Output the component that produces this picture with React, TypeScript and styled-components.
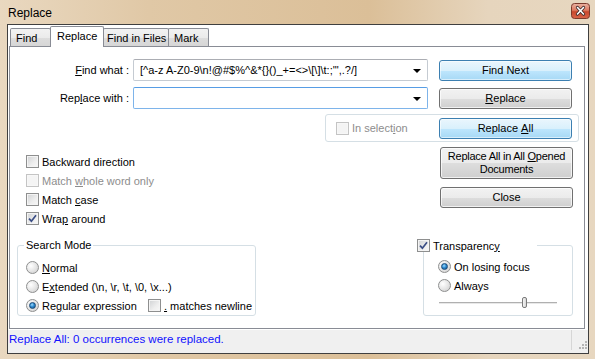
import styled, { createGlobalStyle } from 'styled-components';

const GlobalStyle = createGlobalStyle`
  html, body {
    margin: 0;
    padding: 0;
  }
  body {
    font-family: 'Liberation Sans', Arial, sans-serif;
    font-size: 11px;
    color: #000;
  }
`;

const Window = styled.div`
  width: 595px;
  height: 359px;
  box-sizing: border-box;
  display: flex;
  flex-direction: column;
  overflow: hidden;
  background: linear-gradient(90deg, #e9d8c0 0%, #e0c8a6 25%, #dbbf98 62%, #e6d5bd 82%, #e7d7c0 100%);
`;

const TitleBar = styled.div`
  height: 24px;
  display: flex;
  align-items: center;
  justify-content: space-between;
  padding: 0 5px 0 8px;
`;

const TitleText = styled.span`
  font-size: 12px;
  padding-top: 1px;
`;

const CloseButton = styled.div`
  width: 19px;
  height: 16px;
  margin-top: -3px;
  display: flex;
`;

const Client = styled.div`
  margin: 0 6px 0 7px;
  height: 330px;
  box-sizing: border-box;
  border: 1px solid #3f3f3f;
  background: #fff;
  display: flex;
  flex-direction: column;
`;

const TabStrip = styled.div`
  height: 21px;
  display: flex;
  align-items: flex-end;
  padding-left: 2px;
`;

const Tab = styled.div<{ $active?: boolean; $w: number; $pl: number }>`
  box-sizing: border-box;
  width: ${(p) => p.$w}px;
  height: ${(p) => (p.$active ? 21 : 18)}px;
  margin-left: -1px;
  margin-bottom: ${(p) => (p.$active ? -1 : 0)}px;
  padding-left: ${(p) => p.$pl}px;
  padding-top: 2px;
  border: 1px solid #898c95;
  border-bottom: none;
  border-radius: 2px 2px 0 0;
  line-height: 14px;
  position: relative;
  z-index: ${(p) => (p.$active ? 2 : 1)};
  background: ${(p) =>
    p.$active ? '#fff' : 'linear-gradient(#f2f2f2 0%, #ebebeb 50%, #dddddd 51%, #d6d6d6 100%)'};
  &:first-child {
    margin-left: 0;
  }
`;

const Panel = styled.div`
  margin: 0 3px 0 1px;
  height: 283px;
  box-sizing: border-box;
  border: 1px solid #898c95;
  background: #fff;
  display: flex;
  flex-direction: column;
`;

const FieldRow = styled.div<{ $top: number }>`
  display: flex;
  align-items: center;
  margin-top: ${(p) => p.$top}px;
  height: 22px;
`;

const FieldLabel = styled.div`
  width: 119px;
  text-align: right;
  margin-right: 4px;
`;

const Combo = styled.div<{ $focus?: boolean }>`
  width: 295px;
  height: 22px;
  box-sizing: border-box;
  border: 1px solid ${(p) => (p.$focus ? '#7eb4ea' : '#c5cbd2')};
  border-top-color: ${(p) => (p.$focus ? '#569de5' : '#abadb3')};
  border-radius: 2px;
  display: flex;
  align-items: center;
  padding-left: 6px;
  margin-right: 11px;
  white-space: nowrap;
`;

const ComboText = styled.span`
  flex: 1;
  overflow: hidden;
`;

const ComboArrow = styled.span`
  width: 0;
  height: 0;
  margin: 1px 6px 0 4px;
  border-left: 4px solid transparent;
  border-right: 4px solid transparent;
  border-top: 4px solid #000;
`;

const Button = styled.div<{ $primary?: boolean; $tall?: boolean }>`
  width: 133px;
  height: ${(p) => (p.$tall ? 32 : 21)}px;
  box-sizing: border-box;
  border: 1px solid ${(p) => (p.$primary ? '#3c7fb1' : '#707070')};
  border-radius: 3px;
  box-shadow: inset 0 0 0 1px ${(p) => (p.$primary ? 'rgba(255,255,255,0.55)' : 'rgba(255,255,255,0.7)')};
  background: ${(p) =>
    p.$primary
      ? 'linear-gradient(#eaf6fd 0%, #d9f0fc 50%, #bee6fd 51%, #a7d9f5 100%)'
      : 'linear-gradient(#f2f2f2 0%, #ebebeb 50%, #dddddd 51%, #cfcfcf 100%)'};
  display: flex;
  align-items: center;
  justify-content: center;
  text-align: center;
  line-height: 13px;
  white-space: nowrap;
  letter-spacing: ${(p) => (p.$tall ? '-0.25px' : '0')};
`;

const SelectionGroup = styled.div`
  margin: 5px 0 0 315px;
  width: 254px;
  height: 28px;
  box-sizing: border-box;
  border: 1px solid #d5dfe5;
  border-radius: 3px;
  display: flex;
  align-items: center;
  justify-content: space-between;
  padding: 0 6px 0 10px;
`;

const Middle = styled.div`
  display: flex;
  justify-content: space-between;
  padding: 0 11px 0 16px;
`;

const OptionList = styled.div`
  display: flex;
  flex-direction: column;
  padding-top: 10px;
`;

const ButtonColumn = styled.div`
  display: flex;
  flex-direction: column;
  gap: 8px;
  padding-top: 5px;
`;

const OptionRow = styled.div<{ $w?: number }>`
  height: 19px;
  display: flex;
  align-items: center;
  gap: 3px;
  ${(p) => (p.$w ? `width: ${p.$w}px;` : '')}
`;

const OptionText = styled.span<{ $disabled?: boolean }>`
  color: ${(p) => (p.$disabled ? '#8d8d8d' : '#000')};
  white-space: nowrap;
`;

const U = styled.span`
  text-decoration: underline;
  text-underline-offset: 1px;
`;

const CheckBoxBox = styled.span<{ $disabled?: boolean }>`
  width: 13px;
  height: 13px;
  box-sizing: border-box;
  flex: none;
  border: 1px solid ${(p) => (p.$disabled ? '#c4c4c4' : '#8e8f8f')};
  background: ${(p) =>
    p.$disabled ? '#f4f4f4' : 'linear-gradient(135deg, #cfd1d3 0%, #eeeeee 60%, #f8f8f8 100%)'};
  box-shadow: inset 0 0 0 1px ${(p) => (p.$disabled ? '#f7f7f7' : '#f4f4f4')};
  display: flex;
  align-items: center;
  justify-content: center;
`;

const RadioDot = styled.span<{ $checked?: boolean }>`
  width: 13px;
  height: 13px;
  box-sizing: border-box;
  flex: none;
  border-radius: 50%;
  border: 1px solid #8e8f8f;
  background: radial-gradient(circle at 35% 35%, #ffffff 0%, #e6e6e6 50%, #c9c9c9 100%);
  display: flex;
  align-items: center;
  justify-content: center;
  &::after {
    content: '';
    display: ${(p) => (p.$checked ? 'block' : 'none')};
    width: 7px;
    height: 7px;
    border-radius: 50%;
    box-sizing: border-box;
    border: 1px solid #1b4a77;
    background: radial-gradient(circle at 40% 35%, #9fdcff 0%, #2e8bd0 45%, #0f4f88 100%);
  }
`;

const BottomRow = styled.div`
  display: flex;
  align-items: flex-start;
  margin-top: 11px;
  padding-left: 7px;
`;

const GroupBox = styled.fieldset<{ $w: number; $gap?: number }>`
  margin: 0 0 0 ${(p) => p.$gap ?? 0}px;
  padding: 0;
  min-width: 0;
  width: ${(p) => p.$w}px;
  height: 77px;
  box-sizing: border-box;
  border: 1px solid #d5dfe5;
  border-radius: 3px;
`;

const GroupLegend = styled.legend`
  margin-left: 6px;
  padding: 0 2px;
  height: 13px;
  line-height: 13px;
`;

const CheckLegend = styled.legend`
  margin-left: -7px;
  padding: 0;
  width: 120px;
  height: 13px;
  background: #fff;
  display: flex;
  align-items: center;
  gap: 3px;
`;

const GroupBody = styled.div<{ $pl: number; $pt: number }>`
  display: flex;
  flex-direction: column;
  padding: ${(p) => p.$pt}px 0 0 ${(p) => p.$pl}px;
`;

const InlineRow = styled.div`
  display: flex;
  align-items: center;
`;

const Slider = styled.div`
  position: relative;
  width: 118px;
  height: 15px;
  margin-left: 1px;
  display: flex;
  align-items: center;
`;

const SliderTrack = styled.div`
  width: 100%;
  height: 2px;
  box-sizing: border-box;
  border-top: 1px solid #b0b0b0;
  border-bottom: 1px solid #e8e8e8;
`;

const SliderThumb = styled.div`
  position: absolute;
  top: 2px;
  width: 5px;
  height: 11px;
  box-sizing: border-box;
  border: 1px solid #7a7a7a;
  border-radius: 2px;
  background: linear-gradient(90deg, #f4f4f4, #d8d8d8);
`;

const StatusBar = styled.div`
  margin-top: 1px;
  height: 23px;
  background: #f0f0f0;
  display: flex;
  align-items: flex-start;
  justify-content: space-between;
`;

const StatusText = styled.span`
  color: #1010ff;
  font-size: 11.5px;
  line-height: 17px;
  padding: 1px 0 0 1px;
`;

const StatusGrip = styled.div`
  width: 16px;
  height: 20px;
  border-left: 1px solid #d6d6d6;
  display: flex;
  align-items: flex-end;
  justify-content: flex-end;
`;

function CheckBox({ checked, disabled }: { checked?: boolean; disabled?: boolean }) {
  return (
    <CheckBoxBox $disabled={disabled}>
      {checked && (
        <svg width="9" height="9" viewBox="0 0 9 9">
          <path d="M1 4.6 L3.4 7.2 L8 1.2" fill="none" stroke="#3b4e85" strokeWidth="1.7" />
        </svg>
      )}
    </CheckBoxBox>
  );
}

function Option({ checked, disabled, children }: { checked?: boolean; disabled?: boolean; children: React.ReactNode }) {
  return (
    <OptionRow>
      <CheckBox checked={checked} disabled={disabled} />
      <OptionText $disabled={disabled}>{children}</OptionText>
    </OptionRow>
  );
}

function RadioOption({ checked, children }: { checked?: boolean; children: React.ReactNode }) {
  return (
    <OptionRow>
      <RadioDot $checked={checked} />
      <OptionText>{children}</OptionText>
    </OptionRow>
  );
}

const tabs = [
  { label: 'Find', w: 41, pl: 5 },
  { label: 'Replace', w: 54, pl: 6, active: true },
  { label: 'Find in Files', w: 66, pl: 3 },
  { label: 'Mark', w: 41, pl: 5 },
];

const findWhat = `[^a-z A-Z0-9\\n!@#$%^&*{}()_+=<>\\[\\]\\t:;'",.?/]`;

export default function App() {
  const opacity = 0.7;
  return (
    <>
      <GlobalStyle />
      <Window>
        <TitleBar>
          <TitleText>Replace</TitleText>
          <CloseButton>
            <svg width="19" height="16" viewBox="0 0 19 16">
              <defs>
                <linearGradient id="cls" x1="0" y1="0" x2="0" y2="1">
                  <stop offset="0" stopColor="#eab3a2" />
                  <stop offset="0.45" stopColor="#dc7a60" />
                  <stop offset="0.55" stopColor="#c9472c" />
                  <stop offset="1" stopColor="#d8664a" />
                </linearGradient>
              </defs>
              <rect x="0.5" y="0.5" width="18" height="15" rx="3" fill="url(#cls)" stroke="#7c3b2c" />
              <path d="M6.5 4.5 L12.5 11 M12.5 4.5 L6.5 11" stroke="#3a2a2a" strokeWidth="3.2" strokeLinecap="round" />
              <path d="M6.5 4.5 L12.5 11 M12.5 4.5 L6.5 11" stroke="#ffffff" strokeWidth="1.6" strokeLinecap="round" />
            </svg>
          </CloseButton>
        </TitleBar>
        <Client>
          <TabStrip>
            {tabs.map((t) => (
              <Tab key={t.label} $active={t.active} $w={t.w} $pl={t.pl}>
                {t.label}
              </Tab>
            ))}
          </TabStrip>
          <Panel>
            <FieldRow $top={12}>
              <FieldLabel>
                <U>F</U>ind what :
              </FieldLabel>
              <Combo>
                <ComboText>{findWhat}</ComboText>
                <ComboArrow />
              </Combo>
              <Button $primary>Find Next</Button>
            </FieldRow>
            <FieldRow $top={6}>
              <FieldLabel>
                Rep<U>l</U>ace with :
              </FieldLabel>
              <Combo $focus>
                <ComboText />
                <ComboArrow />
              </Combo>
              <Button>
                <U>R</U>eplace
              </Button>
            </FieldRow>
            <SelectionGroup>
              <Option disabled>
                In select<U>i</U>on
              </Option>
              <Button $primary>
                Replace&nbsp;<U>A</U>ll
              </Button>
            </SelectionGroup>
            <Middle>
              <OptionList>
                <Option>Backward direction</Option>
                <Option disabled>
                  Match <U>w</U>hole word only
                </Option>
                <Option>
                  Match <U>c</U>ase
                </Option>
                <Option checked>
                  Wra<U>p</U> around
                </Option>
              </OptionList>
              <ButtonColumn>
                <Button $tall>
                  <span>
                    Replace All in All <U>O</U>pened
                    <br />
                    Documents
                  </span>
                </Button>
                <Button>Close</Button>
              </ButtonColumn>
            </Middle>
            <BottomRow>
              <GroupBox $w={239}>
                <GroupLegend>Search Mode</GroupLegend>
                <GroupBody $pl={8} $pt={6}>
                  <RadioOption>
                    <U>N</U>ormal
                  </RadioOption>
                  <RadioOption>
                    E<U>x</U>tended (\n, \r, \t, \0, \x...)
                  </RadioOption>
                  <InlineRow>
                    <OptionRow $w={122}>
                      <RadioDot $checked />
                      <OptionText>
                        Re<U>g</U>ular expression
                      </OptionText>
                    </OptionRow>
                    <Option>
                      <U>.</U> matches newline
                    </Option>
                  </InlineRow>
                </GroupBody>
              </GroupBox>
              <GroupBox $w={150} $gap={167}>
                <CheckLegend>
                  <CheckBox checked />
                  <OptionText>
                    Transparenc<U>y</U>
                  </OptionText>
                </CheckLegend>
                <GroupBody $pl={14} $pt={5}>
                  <RadioOption checked>On losing focus</RadioOption>
                  <RadioOption>Always</RadioOption>
                  <Slider>
                    <SliderTrack />
                    <SliderThumb style={{ left: `${Math.round(opacity * 118)}px` }} />
                  </Slider>
                </GroupBody>
              </GroupBox>
            </BottomRow>
          </Panel>
          <StatusBar>
            <StatusText>Replace All: 0 occurrences were replaced.</StatusText>
            <StatusGrip>
              <svg width="11" height="11" viewBox="0 0 11 11">
                {[
                  [8, 2],
                  [5, 5],
                  [8, 5],
                  [2, 8],
                  [5, 8],
                  [8, 8],
                ].map(([x, y]) => (
                  <rect key={`${x}-${y}`} x={x} y={y} width="2" height="2" fill="#b4b4b4" />
                ))}
              </svg>
            </StatusGrip>
          </StatusBar>
        </Client>
      </Window>
    </>
  );
}
